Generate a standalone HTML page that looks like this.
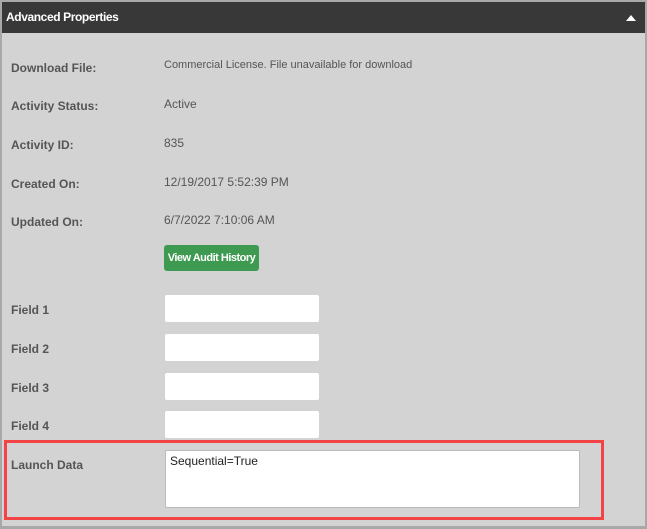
<!DOCTYPE html>
<html><head><style>
body{margin:0;width:647px;height:529px;background:#a8a8a8;position:relative;overflow:hidden;font-family:"Liberation Sans",sans-serif;}
.panel{position:absolute;left:2px;top:2px;width:643px;height:524px;background:#d3d3d3;}
.hdr{position:absolute;left:0;top:0;width:643px;height:31px;background:#383838;color:#fff;font-weight:bold;font-size:12px;line-height:31px;padding-left:4px;box-sizing:border-box;letter-spacing:-0.4px}
.tri{position:absolute;left:624px;top:13px;width:0;height:0;border-left:5px solid transparent;border-right:5px solid transparent;border-bottom:6px solid #fff;}
.l{position:absolute;left:9px;font-weight:bold;font-size:12px;color:#555;}
.v{position:absolute;left:162px;font-size:12px;color:#555;}
.in{position:absolute;left:163px;width:154px;height:27px;background:#fff;border-radius:2px;}
.btn{position:absolute;left:162px;top:243px;width:95px;height:26px;background:#3d9a50;border-radius:3px;color:#fff;font-weight:bold;font-size:11px;line-height:26px;text-align:center;letter-spacing:-0.5px;white-space:nowrap}
.red{position:absolute;left:4px;top:440px;width:600px;height:80px;border:3px solid #f24447;box-sizing:border-box;}
.ta{position:absolute;left:165px;top:450px;width:415px;height:58px;background:#fff;border:1px solid #bbb;box-sizing:border-box;border-radius:2px;font-size:12px;color:#222;padding:3px 4px;}
</style></head><body>
<div class="panel">
<div class="hdr">Advanced Properties</div><div class="tri"></div>
<div class="l" style="top:59px">Download File:</div><div class="v" style="top:57px;font-size:11px">Commercial License. File unavailable for download</div>
<div class="l" style="top:97px">Activity Status:</div><div class="v" style="top:95px">Active</div>
<div class="l" style="top:136px">Activity ID:</div><div class="v" style="top:134px">835</div>
<div class="l" style="top:175px">Created On:</div><div class="v" style="top:173px">12/19/2017 5:52:39 PM</div>
<div class="l" style="top:213px">Updated On:</div><div class="v" style="top:211px">6/7/2022 7:10:06 AM</div>
<div class="btn">View Audit History</div>
<div class="l" style="top:301px">Field 1</div><div class="in" style="top:293px"></div>
<div class="l" style="top:340px">Field 2</div><div class="in" style="top:332px"></div>
<div class="l" style="top:379px">Field 3</div><div class="in" style="top:371px"></div>
<div class="l" style="top:417px">Field 4</div><div class="in" style="top:409px"></div>
<div class="l" style="top:456px">Launch Data</div>
</div>
<div class="red"></div>
<div class="ta">Sequential=True</div>
</body></html>
